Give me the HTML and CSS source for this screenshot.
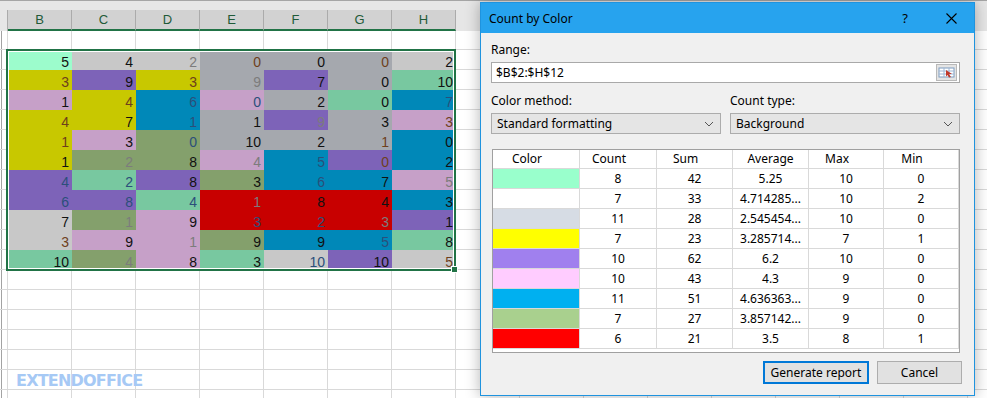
FILE: index.html
```html
<!DOCTYPE html>
<html>
<head>
  <title>Count by Color</title>
  <meta name="viewport" content="width=device-width, initial-scale=1.0">
  <link rel="stylesheet" href="styles.css">
</head>
<body>
  <div class="sheet">
    <div class="sheet-top"></div>

    <div class="col-heads">
      <div class="ch corner"></div>
      <div class="ch sel">B</div>
      <div class="ch sel">C</div>
      <div class="ch sel">D</div>
      <div class="ch sel">E</div>
      <div class="ch sel">F</div>
      <div class="ch sel">G</div>
      <div class="ch sel">H</div>
      <div class="ch"></div>
      <div class="ch"></div>
      <div class="ch"></div>
      <div class="ch"></div>
      <div class="ch"></div>
      <div class="ch"></div>
      <div class="ch"></div>
      <div class="ch"></div>
    </div>

    <div class="cells">
      <div class="data">
        <!-- row 2 -->
        <div class="mi">5</div><div class="lg">4</div><div class="lg t-g">2</div><div class="gy t-o">0</div><div class="gy">0</div><div class="gy t-o">0</div><div class="lg">2</div>
        <!-- row 3 -->
        <div class="ol t-o">3</div><div class="pu">9</div><div class="ol t-o">3</div><div class="gy t-g">9</div><div class="pu">7</div><div class="gy">0</div><div class="gr">10</div>
        <!-- row 4 -->
        <div class="pk">1</div><div class="ol t-o">4</div><div class="bl t-u">6</div><div class="pk t-u">0</div><div class="gy">2</div><div class="gr">0</div><div class="bl t-u">7</div>
        <!-- row 5 -->
        <div class="ol t-o">4</div><div class="ol">7</div><div class="bl t-u">1</div><div class="gy">1</div><div class="pu t-g">9</div><div class="gy">3</div><div class="pk t-o">3</div>
        <!-- row 6 -->
        <div class="ol t-o">1</div><div class="pk">3</div><div class="sg t-u">0</div><div class="gy">10</div><div class="gy">2</div><div class="gy t-o">1</div><div class="bl">0</div>
        <!-- row 7 -->
        <div class="ol">1</div><div class="sg t-g">2</div><div class="sg">8</div><div class="pk t-g">4</div><div class="bl t-u">5</div><div class="pu t-o">0</div><div class="bl">2</div>
        <!-- row 8 -->
        <div class="pu t-u">4</div><div class="gr t-u">2</div><div class="pu">8</div><div class="sg">3</div><div class="bl t-u">6</div><div class="bl">7</div><div class="pk t-g">5</div>
        <!-- row 9 -->
        <div class="pu t-u">6</div><div class="pu t-u">8</div><div class="gr t-u">4</div><div class="rd t-g">1</div><div class="rd">8</div><div class="rd">4</div><div class="bl">3</div>
        <!-- row 10 -->
        <div class="lg">7</div><div class="sg t-g">1</div><div class="pk">9</div><div class="rd t-u">3</div><div class="rd t-u">2</div><div class="rd t-g">3</div><div class="pu">1</div>
        <!-- row 11 -->
        <div class="lg t-o">3</div><div class="pk">9</div><div class="pk t-g">1</div><div class="sg">9</div><div class="bl">9</div><div class="bl t-u">5</div><div class="gr">8</div>
        <!-- row 12 -->
        <div class="gr">10</div><div class="sg t-g">4</div><div class="pk">8</div><div class="gr">3</div><div class="lg t-u">10</div><div class="pu">10</div><div class="lg t-o">5</div>
      </div>
    </div>

    <div class="selection"><span class="handle"></span></div>
    <div class="watermark">EXTENDOFFICE</div>
  </div>

  <div class="dialog">
    <div class="titlebar">
      <span class="title">Count by Color</span>
      <span class="tb-btn">?</span>
      <span class="tb-btn">
        <svg width="11" height="11" viewBox="0 0 11 11"><path d="M0.5 0.5 L10.5 10.5 M10.5 0.5 L0.5 10.5" stroke="#000" stroke-width="1.1" fill="none"/></svg>
      </span>
    </div>

    <div class="dlg-body">
      <div class="label">Range:</div>
      <div class="range">
        <span>$B$2:$H$12</span>
        <svg class="pick" width="21" height="17" viewBox="0 0 21 17">
          <rect x="0.5" y="0.5" width="20" height="16" fill="#e4e4e4" stroke="#b9b9b9"/>
          <rect x="3" y="4" width="15" height="9" fill="#fff" stroke="#7d9cc0"/>
          <path d="M3 7 H18 M3 10 H18 M8 4 V13 M13 4 V13" stroke="#9fb6d4" stroke-width="1"/>
          <path d="M10 6 L16 10 L13 10 L15 13 L13 13.5 L11.5 11 L10 12.5 Z" fill="#c0392b"/>
        </svg>
      </div>

      <div class="pair">
        <div>
          <div class="label">Color method:</div>
          <div class="select">
            <span>Standard formatting</span>
            <svg width="10" height="6" viewBox="0 0 10 6"><path d="M1 1 L5 5 L9 1" stroke="#555" fill="none"/></svg>
          </div>
        </div>
        <div>
          <div class="label">Count type:</div>
          <div class="select">
            <span>Background</span>
            <svg width="10" height="6" viewBox="0 0 10 6"><path d="M1 1 L5 5 L9 1" stroke="#555" fill="none"/></svg>
          </div>
        </div>
      </div>

      <div class="results">
        <div class="th">Color</div><div class="th">Count</div><div class="th">Sum</div><div class="th avg">Average</div><div class="th">Max</div><div class="th">Min</div>

        <div class="sw" style="background:#99ffcc"></div><div>8</div><div>42</div><div>5.25</div><div>10</div><div>0</div>
        <div class="sw" style="background:#ffffff"></div><div>7</div><div>33</div><div>4.714285...</div><div>10</div><div>2</div>
        <div class="sw" style="background:#d6dce4"></div><div>11</div><div>28</div><div>2.545454...</div><div>10</div><div>0</div>
        <div class="sw" style="background:#ffff00"></div><div>7</div><div>23</div><div>3.285714...</div><div>7</div><div>1</div>
        <div class="sw" style="background:#a080ee"></div><div>10</div><div>62</div><div>6.2</div><div>10</div><div>0</div>
        <div class="sw" style="background:#ffccff"></div><div>10</div><div>43</div><div>4.3</div><div>9</div><div>0</div>
        <div class="sw" style="background:#00b0f0"></div><div>11</div><div>51</div><div>4.636363...</div><div>9</div><div>0</div>
        <div class="sw" style="background:#a9d08e"></div><div>7</div><div>27</div><div>3.857142...</div><div>9</div><div>0</div>
        <div class="sw" style="background:#ff0000"></div><div>6</div><div>21</div><div>3.5</div><div>8</div><div>1</div>
      </div>

      <div class="buttons">
        <button class="primary">Generate report</button>
        <button class="cancel">Cancel</button>
      </div>
    </div>
  </div>
</body>
</html>
```

FILE: styles.css
```css
* {
  box-sizing: border-box;
  margin: 0;
  padding: 0;
}

body {
  width: 987px;
  height: 398px;
  overflow: hidden;
  position: relative;
  background-color: #fff;
  font-family: "Liberation Sans", Arial, sans-serif;
}

/* Spreadsheet */
.sheet {
  position: relative;
  width: 987px;
  height: 398px;
  overflow: hidden;
}

.sheet-top {
  height: 10px;
  background-color: #e6e6e6;
  border-top: 1px solid #a5a5a5;
}

.col-heads {
  display: grid;
  grid-template-columns: 8px repeat(15, 64px);
  height: 21px;
  background-color: #e6e6e6;
}

.ch {
  border-right: 1px solid #c8c8c8;
  text-align: center;
  font-size: 13px;
  line-height: 19px;
  color: #444;
}

.ch.corner {
  border-right-color: #ababab;
}

.ch.sel {
  background-color: #d2d2d2;
  border-right-color: #ababab;
  border-bottom: 2px solid #217346;
  color: #1f5a38;
}

.cells {
  height: 367px;
  padding: 19px 0 0 8px;
  background-image:
    linear-gradient(to right, #d9d9d9 1px, transparent 1px),
    linear-gradient(to bottom, #d9d9d9 1px, transparent 1px),
    linear-gradient(#a3a3a3, #a3a3a3);
  background-size: 64px 100%, 100% 20px, 1px 100%;
  background-position: 7px 0, 0 18px, 1px 0;
  background-repeat: repeat, repeat, no-repeat;
}

.data {
  display: grid;
  grid-template-columns: repeat(7, 64px);
  grid-auto-rows: 20px;
}

.data div {
  text-align: right;
  padding-right: 3px;
  font-size: 14px;
  line-height: 24px;
  color: #111;
  overflow: hidden;
}

/* cell fills */
.mi { background-color: #9cfccc; }
.lg { background-color: #c8c8c8; }
.gy { background-color: #a5a8ae; }
.ol { background-color: #c8c800; }
.pu { background-color: #7d63b8; }
.pk { background-color: #c6a0c8; }
.bl { background-color: #0088b8; }
.sg { background-color: #84a06c; }
.gr { background-color: #78c8a0; }
.rd { background-color: #c80000; }

/* font colours */
.data .t-g { color: #7c7c7c; }
.data .t-o { color: #6e3f1c; }
.data .t-u { color: #2b4f7a; }

.selection {
  position: absolute;
  left: 6px;
  top: 49px;
  width: 450px;
  height: 222px;
  border: 2px solid #217346;
  box-shadow: inset 0 0 0 1px #fff;
}

.selection .handle {
  position: absolute;
  right: -4px;
  bottom: -4px;
  width: 7px;
  height: 7px;
  background-color: #217346;
  border: 1px solid #fff;
}

.watermark {
  position: absolute;
  left: 16px;
  top: 371px;
  font-family: "DejaVu Sans", sans-serif;
  font-weight: bold;
  font-size: 16px;
  letter-spacing: -0.8px;
  color: #a6c9f5;
}

/* Dialog */
.dialog {
  position: absolute;
  left: 480px;
  top: 2px;
  width: 495px;
  height: 394px;
  border: 1px solid #1f93de;
  background-color: #f0f0f0;
  box-shadow: 0 0 14px rgba(0, 0, 0, 0.3);
  font-family: "Noto Sans", "Open Sans", sans-serif;
  font-size: 12px;
  color: #000;
}

.titlebar {
  height: 30px;
  background-color: #27a3ee;
  display: flex;
  align-items: center;
  padding-left: 8px;
}

.title {
  flex: 1;
}

.tb-btn {
  width: 46px;
  height: 30px;
  display: flex;
  align-items: center;
  justify-content: center;
  font-size: 13px;
}

.dlg-body {
  padding: 9px 14px 0 10px;
}

.label {
  line-height: 16px;
}

.range {
  margin-top: 4px;
  height: 21px;
  border: 1px solid #a9a9a9;
  background-color: #fff;
  display: flex;
  align-items: center;
  padding: 0 2px 0 4px;
}

.range span {
  flex: 1;
}

.pair {
  display: grid;
  grid-template-columns: 1fr 1fr;
  column-gap: 9px;
  margin-top: 10px;
}

.select {
  margin-top: 4px;
  height: 21px;
  border: 1px solid #acacac;
  background-color: #e5e5e5;
  display: flex;
  align-items: center;
  justify-content: space-between;
  padding: 0 6px 0 5px;
}

.results {
  margin: 15px 0 0 1px;
  height: 204px;
  border: 1px solid #a0a0a0;
  background-color: #fff;
  display: grid;
  grid-template-columns: 87px 77px 76px 76px 75px 1fr;
  grid-template-rows: 19px repeat(9, 20px);
  align-content: start;
}

.results div {
  border-right: 1px solid #d9d9d9;
  border-bottom: 1px solid #d9d9d9;
  text-align: center;
  line-height: 19px;
}

.results .th {
  padding-right: 18px;
  line-height: 18px;
}

.results .th.avg {
  padding-right: 0;
}

.buttons {
  display: flex;
  justify-content: flex-end;
  gap: 8px;
  margin-top: 8px;
  margin-right: -2px;
}

.buttons button {
  height: 23px;
  font-family: inherit;
  font-size: 12px;
  color: #000;
  background-color: #e1e1e1;
  border: 1px solid #adadad;
}

.buttons .primary {
  width: 106px;
  border: 2px solid #0078d7;
}

.buttons .cancel {
  width: 85px;
}
```
